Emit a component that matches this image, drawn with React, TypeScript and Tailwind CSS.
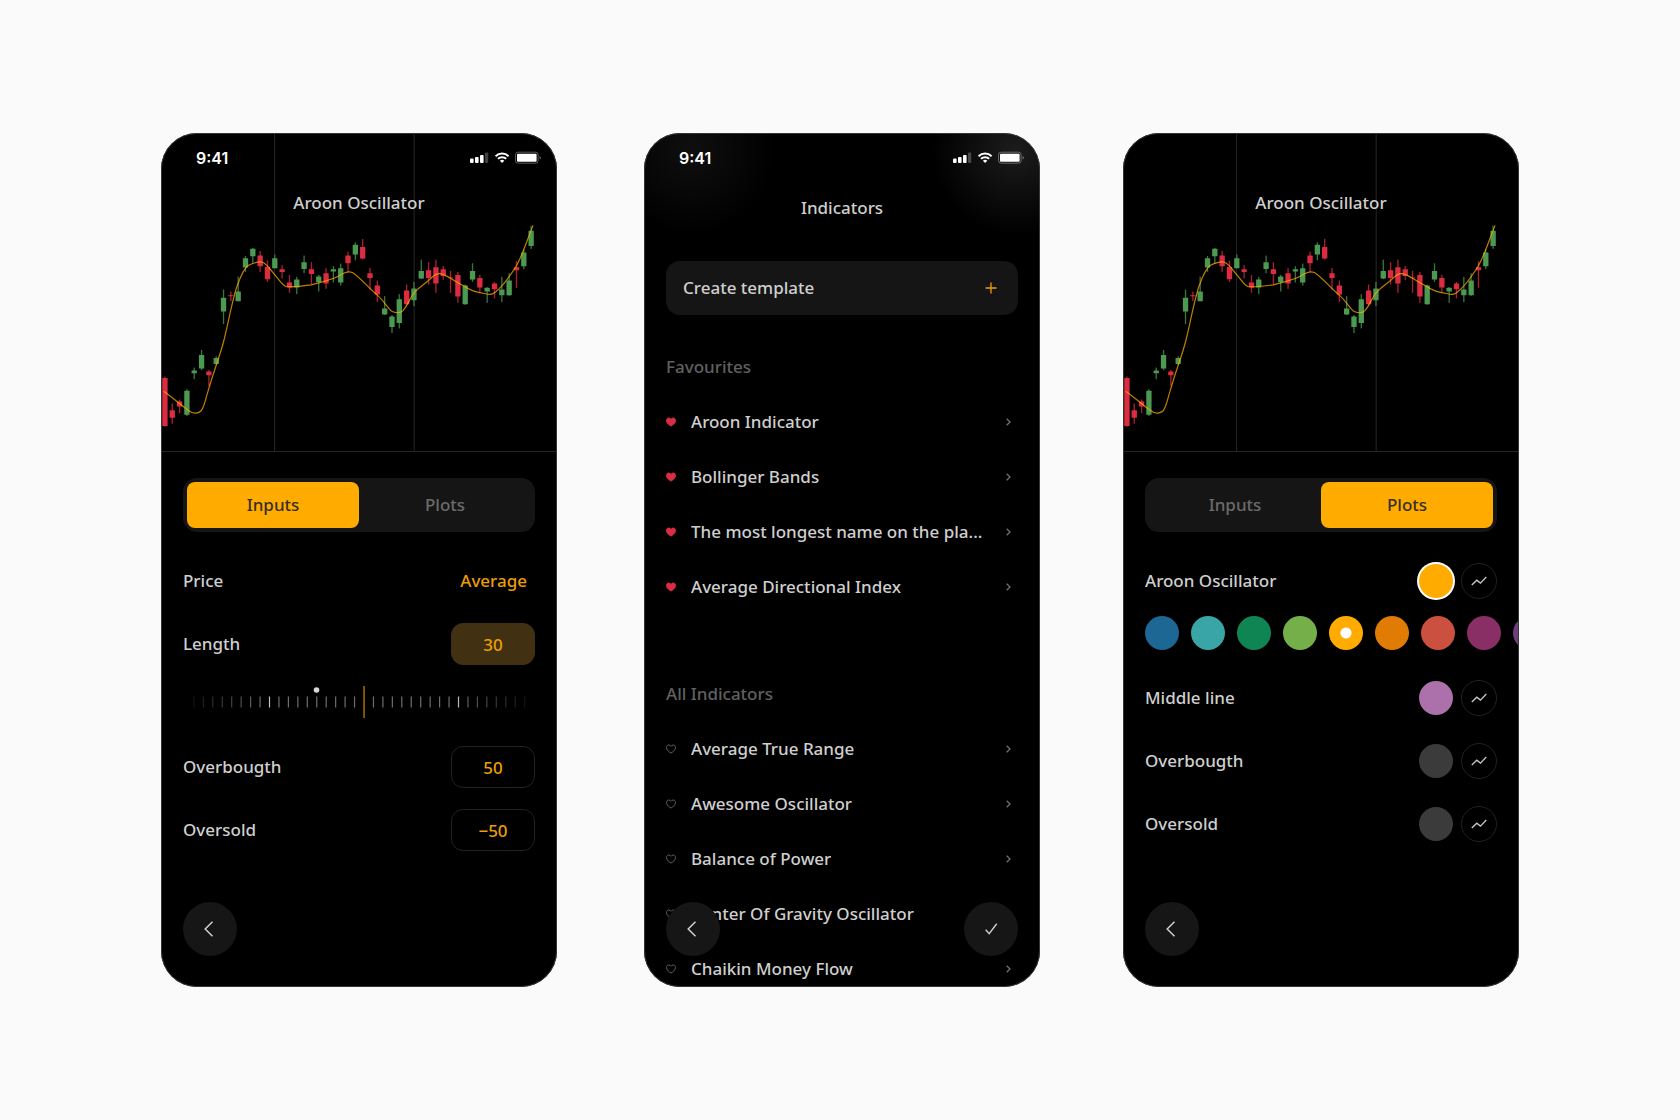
import { useState, type ReactNode } from 'react';
import { clsx } from 'clsx';

type Candle = [high: number, top: number, bottom: number, low: number, up: 0 | 1];

const candles: Candle[] = [
  [487, 491, 636, 638, 0],
  [568, 588, 611, 629, 0],
  [556, 562, 577, 597, 0],
  [525, 530, 602, 606, 1],
  [460, 469, 477, 495, 1],
  [407, 422, 463, 468, 1],
  [467, 472, 483, 516, 0],
  [426, 431, 449, 452, 1],
  [225, 250, 291, 329, 1],
  [231, 242, 245, 260, 0],
  [186, 231, 260, 260, 1],
  [124, 131, 159, 172, 1],
  [100, 102, 125, 147, 1],
  [109, 123, 155, 172, 0],
  [138, 157, 194, 202, 0],
  [120, 131, 161, 161, 1],
  [152, 164, 172, 192, 0],
  [182, 204, 219, 235, 0],
  [187, 195, 219, 239, 1],
  [123, 143, 163, 176, 1],
  [143, 164, 178, 209, 0],
  [181, 186, 203, 231, 1],
  [161, 176, 207, 223, 0],
  [155, 164, 171, 204, 1],
  [147, 161, 204, 213, 1],
  [111, 123, 146, 172, 0],
  [83, 90, 120, 137, 1],
  [73, 97, 132, 135, 0],
  [160, 176, 190, 226, 0],
  [198, 213, 240, 263, 0],
  [245, 282, 300, 302, 1],
  [302, 306, 338, 356, 1],
  [239, 254, 326, 342, 1],
  [210, 228, 269, 272, 0],
  [202, 222, 257, 275, 1],
  [135, 169, 192, 194, 1],
  [143, 167, 190, 210, 0],
  [135, 158, 207, 235, 0],
  [154, 164, 184, 196, 0],
  [169, 189, 191, 235, 0],
  [172, 181, 246, 265, 0],
  [210, 213, 269, 271, 1],
  [146, 169, 195, 202, 1],
  [181, 190, 219, 235, 0],
  [218, 220, 231, 265, 1],
  [202, 207, 224, 252, 0],
  [187, 225, 242, 263, 1],
  [176, 198, 242, 244, 1],
  [140, 158, 167, 220, 0],
  [104, 114, 155, 164, 1],
  [33, 48, 94, 103, 1],
];

const averageLine =
  'M24 531C45 545 75 572 100 590C112 600 132 600 140 585C148 570 150 555 158 530C175 470 195 420 205 380C222 310 232 250 246 212C256 185 268 160 278 153C290 147 310 140 322 143C338 150 350 172 362 185C375 200 382 212 392 216C410 219 440 215 468 211C500 203 530 195 550 185C565 176 578 168 592 174C610 184 640 219 667 242C690 262 700 285 712 291C724 296 738 296 745 288C760 270 765 250 780 232C800 213 815 205 830 190C838 182 848 174 860 178C880 184 900 200 925 213C950 230 965 233 990 237C1005 241 1010 242 1022 233C1050 212 1065 185 1085 155C1105 120 1120 70 1136 32';

const favourites = [
  'Aroon Indicator',
  'Bollinger Bands',
  'The most longest name on the pla...',
  'Average Directional Index',
];

const indicators = [
  'Average True Range',
  'Awesome Oscillator',
  'Balance of Power',
  'Center Of Gravity Oscillator',
  'Chaikin Money Flow',
];

const palette = [
  { name: 'Blue', className: 'bg-[#1d6795]' },
  { name: 'Teal', className: 'bg-[#3aa5a7]' },
  { name: 'Green', className: 'bg-[#108554]' },
  { name: 'Lime', className: 'bg-[#75af49]' },
  { name: 'Amber', className: 'bg-[#ffab00]' },
  { name: 'Orange', className: 'bg-[#e07c04]' },
  { name: 'Red', className: 'bg-[#cb503f]' },
  { name: 'Plum', className: 'bg-[#8a2f65]' },
  { name: 'Violet', className: 'bg-[#6d3f7a]' },
];

const Phone = ({ className, children }: { className?: string; children: ReactNode }) => (
  <section
    className={clsx(
      'relative flex h-[854px] min-w-0 max-w-[396px] flex-1 flex-col overflow-hidden rounded-[36px] bg-black outline outline-1 -outline-offset-1 outline-[#363636]',
      className
    )}
  >
    {children}
  </section>
);

const StatusBar = () => (
  <div className="flex h-[50px] shrink-0 items-center justify-between pr-[14px] pl-[35px]">
    <span className="font-[Inter,sans-serif] text-[16px] leading-5 font-semibold text-white">9:41</span>
    <svg className="h-4 w-[73px]" viewBox="0 0 73 16" fill="white" aria-hidden="true">
      <rect x="0" y="8.5" width="3.6" height="4.5" rx="1" />
      <rect x="5" y="7" width="3.6" height="6" rx="1" />
      <rect x="10" y="5" width="3.6" height="8" rx="1" />
      <rect x="15" y="2.5" width="3.2" height="10.5" rx="1" opacity="0.25" />
      <g fill="none" stroke="white" strokeWidth="2">
        <path d="M25.6 6.2a9.3 9.3 0 0 1 13 0" />
        <path d="M28 8.8a5.9 5.9 0 0 1 8.2 0" />
      </g>
      <path d="M32.1 13 29.9 10.8a3.2 3.2 0 0 1 4.4 0z" />
      <rect x="45.5" y="2.2" width="22.6" height="11" rx="2.6" fill="none" stroke="white" strokeOpacity="0.35" />
      <rect x="47" y="3.7" width="19.6" height="8" rx="1" />
      <path d="M69.6 6v3.6c.8-.3 1.3-1 1.3-1.8s-.5-1.5-1.3-1.8z" opacity="0.4" />
    </svg>
  </div>
);

const Chart = () => (
  <svg
    className="col-start-1 row-start-1 h-[319px] w-full border-b border-[#262626]"
    viewBox="18 -246 1188 957"
    role="img"
    aria-label="Price chart"
  >
    <path d="M358-246V711M778-246V711" stroke="#262626" strokeWidth="3" />
    {candles.map(([high, top, bottom, low, up], i) => (
      <g key={i} transform={`translate(${28 + i * 22.04} 0)`} fill={up ? '#4c9a51' : '#dc2c41'}>
        <rect x="-2" y={high} width="4" height={low - high} opacity="0.75" />
        <rect x="-8" y={top} width="16" height={bottom - top} rx="1" />
      </g>
    ))}
    <path d={averageLine} fill="none" stroke="#ffab00" strokeWidth="3.6" strokeOpacity="0.75" />
  </svg>
);

const ChartHeader = ({ statusBar }: { statusBar?: boolean }) => (
  <header className="grid">
    <Chart />
    <div className="col-start-1 row-start-1">
      {statusBar ? <StatusBar /> : <div className="h-[50px]" />}
      <h2 className="pt-2 text-center text-[17px] leading-6 font-medium">Aroon Oscillator</h2>
    </div>
  </header>
);

const Tabs = ({ active }: { active: string }) => {
  const [tab, setTab] = useState(active);

  return (
    <div role="tablist" className="mx-[22px] mt-[26px] grid h-[54px] grid-cols-2 rounded-[14px] bg-[#151515] p-1">
      {['Inputs', 'Plots'].map((name) => (
        <button
          key={name}
          role="tab"
          aria-selected={tab === name}
          onClick={() => setTab(name)}
          className={clsx('rounded-lg text-[17px] font-medium', tab === name ? 'bg-[#ffab00] text-[#363022]' : 'text-[#6b6b6b]')}
        >
          {name}
        </button>
      ))}
    </div>
  );
};

const RoundButton = ({ label, className, children }: { label: string; className: string; children: ReactNode }) => (
  <button
    aria-label={label}
    className={clsx('absolute bottom-[31px] flex size-[54px] items-center justify-center rounded-full bg-[#161616] text-[#cfcfcf]', className)}
  >
    {children}
  </button>
);

const BackButton = () => (
  <RoundButton label="Back" className="left-[22px]">
    <svg className="size-5" viewBox="0 0 20 20" fill="none" stroke="currentColor" strokeWidth="1.5" aria-hidden="true">
      <path d="M12.5 2.8 5.2 10l7.3 7.2" />
    </svg>
  </RoundButton>
);

const NumberRow = ({ id, label, value, filled }: { id: string; label: string; value: string; filled?: boolean }) => (
  <div className="flex items-center justify-between">
    <label htmlFor={id}>{label}</label>
    <input
      id={id}
      defaultValue={value}
      className={clsx(
        'h-[42px] w-[84px] rounded-xl border text-center text-[#eb9f04] outline-none',
        filled ? 'border-[#423013] bg-[#423013]' : 'border-[#222] bg-black'
      )}
    />
  </div>
);

const Ruler = () => {
  const ticks = Array.from({ length: 36 }, (_, i) => i - 18);

  return (
    <div className="grid h-[39px]">
      <svg className="col-start-1 row-start-1 h-[39px] w-full" viewBox="0 0 352 39" aria-hidden="true">
        {ticks.map((tick) => {
          const major = tick === -10 || tick === 10;
          const fade = Math.min(1, (19 - Math.abs(tick + 0.5)) / 9);
          return (
            <rect
              key={tick}
              x={180.4 + tick * 9.45}
              y="10.5"
              width="1.2"
              height="11"
              fill={major ? '#c4c4c4' : '#6e6e6e'}
              opacity={tick === 0 ? 0 : fade}
            />
          );
        })}
        <rect x="180.4" y="0" width="1.3" height="32" fill="#ffab00" opacity="0.75" />
        <circle cx="133.5" cy="4" r="2.8" fill="#d6d6d6" />
      </svg>
      <input
        type="range"
        aria-label="Length"
        min="12"
        max="47"
        defaultValue="30"
        className="col-start-1 row-start-1 m-0 h-full w-full opacity-0"
      />
    </div>
  );
};

const PlotRow = ({ label, color, selected }: { label: string; color: string; selected?: boolean }) => (
  <div className="flex h-[42px] items-center">
    <span className="flex-1">{label}</span>
    <button
      aria-label={label + ' color'}
      className={clsx('mr-2 size-[34px] rounded-full', color, selected && 'ring-2 ring-white')}
    />
    <button aria-label={label + ' line style'} className="flex size-9 items-center justify-center rounded-full border border-[#222]">
      <svg className="size-4" viewBox="0 0 16 16" fill="none" stroke="#c8c8c8" strokeWidth="1.3" aria-hidden="true">
        <path d="M.8 12 5.8 7.2l3.6 2.9L15.3 4" />
      </svg>
    </button>
  </div>
);

const IndicatorRow = ({ name, favourite }: { name: string; favourite?: boolean }) => (
  <li className="flex h-[55px] items-center">
    <button aria-label={(favourite ? 'Remove from' : 'Add to') + ' favourites: ' + name} className="mr-[15px]">
      <svg
        className="size-[10px] overflow-visible"
        viewBox="0 0 10 10"
        fill={favourite ? '#dc2c41' : 'none'}
        stroke={favourite ? '#dc2c41' : '#606060'}
        aria-hidden="true"
      >
        <path d="M5 9C3.6 8.3.5 6.3.5 3.5.5 2 1.5 1 2.7 1 3.8 1 4.6 1.6 5 2.3 5.4 1.6 6.2 1 7.3 1 8.5 1 9.5 2 9.5 3.5 9.5 6.3 6.4 8.3 5 9z" />
      </svg>
    </button>
    <a href="#" className="flex min-w-0 flex-1 items-center justify-between pr-[7px]">
      <span className="truncate">{name}</span>
      <svg className="h-2 w-[5px] shrink-0" viewBox="0 0 5 8" fill="none" stroke="#707070" strokeWidth="1.3" aria-hidden="true">
        <path d="M.7.8 4 4 .7 7.2" />
      </svg>
    </a>
  </li>
);

const InputsScreen = () => (
  <Phone className="mr-[87px]">
    <ChartHeader statusBar />
    <Tabs active="Inputs" />
    <form className="flex flex-col gap-[21px] px-[22px] pt-7">
      <div className="flex h-[42px] items-center justify-between">
        <label htmlFor="price">Price</label>
        <select id="price" className="appearance-none bg-black pr-2 text-right text-[#eb9f04] [text-align-last:right]">
          <option>Average</option>
        </select>
      </div>
      <NumberRow id="length" label="Length" value="30" filled />
      <Ruler />
      <NumberRow id="overbought" label="Overbougth" value="50" />
      <NumberRow id="oversold" label="Oversold" value="−50" />
    </form>
    <BackButton />
  </Phone>
);

const IndicatorsScreen = () => (
  <Phone className="mr-[83px] bg-[radial-gradient(circle_at_94%_2%,#1c1c1c,transparent_84px),radial-gradient(circle_at_12%_2%,#0f0f0f,transparent_84px)]">
    <StatusBar />
    <h2 className="pt-[13px] text-center leading-6">Indicators</h2>
    <div className="shrink-0 px-[22px]">
      <button className="mt-[41px] flex h-[54px] w-full items-center justify-between rounded-[14px] bg-[#151515] pr-[21px] pl-[17px]">
        Create template
        <svg className="size-3" viewBox="0 0 12 12" stroke="#eb9f04" strokeWidth="1.3" aria-hidden="true">
          <path d="M6 .5v11M.5 6h11" />
        </svg>
      </button>
      <h3 className="mt-6 leading-[55px] text-[#606060]">Favourites</h3>
      <ul>
        {favourites.map((name) => (
          <IndicatorRow key={name} name={name} favourite />
        ))}
      </ul>
      <h3 className="mt-[52px] leading-[55px] text-[#606060]">All Indicators</h3>
      <ul>
        {indicators.map((name) => (
          <IndicatorRow key={name} name={name} />
        ))}
      </ul>
    </div>
    <BackButton />
    <RoundButton label="Apply" className="right-[22px]">
      <svg className="size-4" viewBox="0 0 16 16" fill="none" stroke="currentColor" strokeWidth="1.4" aria-hidden="true">
        <path d="M2.7 8.7 6.2 12.6 13.7 2.8" />
      </svg>
    </RoundButton>
  </Phone>
);

const PlotsScreen = () => (
  <Phone>
    <ChartHeader />
    <Tabs active="Plots" />
    <div className="flex flex-col gap-[21px] px-[22px] pt-7">
      <PlotRow label="Aroon Oscillator" color="bg-[#ffab00]" selected />
      <fieldset className="-mt-[7px] -mr-[22px] mb-[6px] flex gap-3 overflow-hidden" aria-label="Aroon Oscillator color">
        {palette.map(({ name, className }) => (
          <input
            key={name}
            type="radio"
            name="color"
            aria-label={name}
            defaultChecked={name === 'Amber'}
            className={clsx(
              'size-[34px] shrink-0 appearance-none rounded-full checked:bg-[radial-gradient(circle,#fff_5px,transparent_6px)]',
              className
            )}
          />
        ))}
      </fieldset>
      <PlotRow label="Middle line" color="bg-[#ac70aa]" />
      <PlotRow label="Overbougth" color="bg-[#3b3b3b]" />
      <PlotRow label="Oversold" color="bg-[#3b3b3b]" />
    </div>
    <BackButton />
  </Phone>
);

const App = () => (
  <main className="flex min-h-screen items-center justify-center bg-[#fafafa] font-['Noto_Sans',sans-serif] text-[17px] leading-6 font-medium text-[#cfcfcf]">
    <InputsScreen />
    <IndicatorsScreen />
    <PlotsScreen />
  </main>
);

export default App;
